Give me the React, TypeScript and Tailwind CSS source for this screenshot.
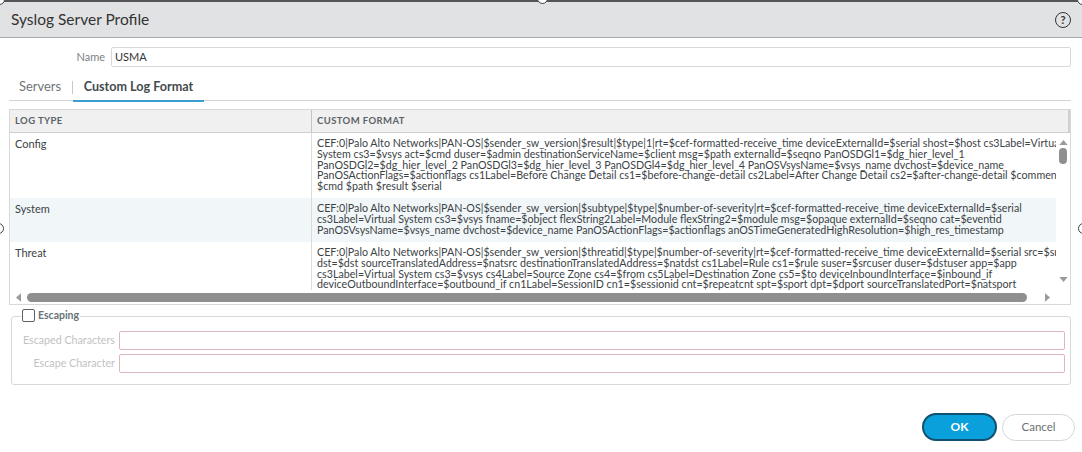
const rows = [
  {
    type: "Config",
    height: "h-[65px]",
    bg: "",
    lines: [
      "CEF:0|Palo Alto Networks|PAN-OS|$sender_sw_version|$result|$type|1|rt=$cef-formatted-receive_time deviceExternalId=$serial shost=$host cs3Label=Virtual",
      "System cs3=$vsys act=$cmd duser=$admin destinationServiceName=$client msg=$path externalId=$seqno PanOSDGl1=$dg_hier_level_1",
      "PanOSDGl2=$dg_hier_level_2 PanOSDGl3=$dg_hier_level_3 PanOSDGl4=$dg_hier_level_4 PanOSVsysName=$vsys_name dvchost=$device_name",
      "PanOSActionFlags=$actionflags cs1Label=Before Change Detail cs1=$before-change-detail cs2Label=After Change Detail cs2=$after-change-detail $comment",
      "$cmd $path $result $serial",
    ],
  },
  {
    type: "System",
    height: "h-[44px]",
    bg: "bg-[#f1f6f8]",
    lines: [
      "CEF:0|Palo Alto Networks|PAN-OS|$sender_sw_version|$subtype|$type|$number-of-severity|rt=$cef-formatted-receive_time deviceExternalId=$serial",
      "cs3Label=Virtual System cs3=$vsys fname=$object flexString2Label=Module flexString2=$module msg=$opaque externalId=$seqno cat=$eventid",
      "PanOSVsysName=$vsys_name dvchost=$device_name PanOSActionFlags=$actionflags anOSTimeGeneratedHighResolution=$high_res_timestamp",
    ],
  },
  {
    type: "Threat",
    height: "h-[48px]",
    bg: "",
    lines: [
      "CEF:0|Palo Alto Networks|PAN-OS|$sender_sw_version|$threatid|$type|$number-of-severity|rt=$cef-formatted-receive_time deviceExternalId=$serial src=$src",
      "dst=$dst sourceTranslatedAddress=$natsrc destinationTranslatedAddress=$natdst cs1Label=Rule cs1=$rule suser=$srcuser duser=$dstuser app=$app",
      "cs3Label=Virtual System cs3=$vsys cs4Label=Source Zone cs4=$from cs5Label=Destination Zone cs5=$to deviceInboundInterface=$inbound_if",
      "deviceOutboundInterface=$outbound_if cn1Label=SessionID cn1=$sessionid cnt=$repeatcnt spt=$sport dpt=$dport sourceTranslatedPort=$natsport",
    ],
  },
];

function Handle({ className }: { className: string }) {
  return <span className={`absolute size-[11px] rounded-full border border-[#444] bg-white ${className}`} />;
}

function Arrow({ dir }: { dir: "up" | "down" | "left" | "right" }) {
  const points = {
    up: "0,6 5,0 10,6",
    down: "0,0 5,6 10,0",
    left: "6,0 0,5 6,10",
    right: "0,0 6,5 0,10",
  }[dir];
  const box = dir === "up" || dir === "down" ? "0 0 10 6" : "0 0 6 10";
  const size = dir === "up" || dir === "down" ? "h-[5px] w-[9px]" : "h-[9px] w-[5px]";
  return (
    <svg viewBox={box} className={size}>
      <polygon points={points} fill="#9a9a9a" />
    </svg>
  );
}

function EscapeField({ label }: { label: string }) {
  return (
    <div className="flex items-center">
      <span className="w-[103px] text-right text-[10.7px] text-[#c2c2c2]">{label}</span>
      <div className="ml-[4px] h-[19px] w-[946px] rounded-[2px] border border-[#dcb8bd] bg-white" />
    </div>
  );
}

export default function App() {
  return (
    <div className="relative h-[452px] w-[1082px] overflow-hidden bg-white font-['Lato',sans-serif] text-[#3c4346]">
      <header className="flex h-[38px] items-center justify-between border-t-2 border-t-[#555] border-b border-b-[#a8a8a8] bg-[#e1e2e3] pl-[11px] pr-[11px]">
        <h1 className="text-[15.5px] text-[#333]">Syslog Server Profile</h1>
        <span className="flex size-[16px] items-center justify-center rounded-full border-[1.5px] border-[#333] text-[11px] font-bold leading-none text-[#333]">
          ?
        </span>
      </header>

      <Handle className="-left-[6px] -top-[6px]" />
      <Handle className="left-[537px] -top-[7px]" />
      <Handle className="-right-[6px] -top-[6px]" />
      <Handle className="-left-[7px] top-[223px]" />
      <Handle className="-right-[7px] top-[223px]" />

      <div className="mt-[9px] flex items-center">
        <span className="w-[105px] text-right text-[11px] text-[#7b8184]">Name</span>
        <div className="ml-[6px] flex h-[20px] w-[960px] items-center rounded-[2px] border border-[#d8d8d8] px-[3px] text-[11px] text-[#333]">
          USMA
        </div>
      </div>

      <nav className="mx-[9px] mt-[7px] flex h-[27px] w-[1062px] items-center border-b border-[#d2d2d2]">
        <span className="ml-[10px] text-[12.9px] text-[#6f7578]">Servers</span>
        <span className="ml-[11px] h-[13px] w-px bg-[#c8c8c8]" />
        <span className="relative flex h-[27px] w-[131px] items-center justify-center text-[12.6px] font-bold text-[#444b4e]">
          Custom Log Format
          <span className="absolute inset-x-0 -bottom-px h-[2px] bg-[#3a9fd0]" />
        </span>
      </nav>

      <section className="mx-[9px] mt-[8px] h-[196px] w-[1062px] border border-[#d8d8d8]">
        <div className="flex h-[23px] border-b border-[#cfcfcf] bg-[#f0f0f0] text-[9.5px] font-bold tracking-[0.4px] text-[#5c6366]">
          <div className="flex w-[302px] items-center border-r border-[#c4c4c4] pl-[5px]">LOG TYPE</div>
          <div className="flex flex-1 items-center pl-[5px]">CUSTOM FORMAT</div>
          <div className="w-[2px] bg-[#d0d0d0]" />
        </div>

        <div className="flex h-[157px]">
          <div className="min-w-0 flex-1 overflow-hidden">
            {rows.map((row) => (
              <div key={row.type} className={`flex overflow-hidden ${row.height} ${row.bg}`}>
                <div className="w-[302px] shrink-0 border-r border-[#dcdcdc] pl-[5px] pt-[4px] text-[11px] leading-[13px]">
                  {row.type}
                </div>
                <div className="min-w-0 flex-1 overflow-hidden pl-[5px] pt-[5px] text-[10.7px] leading-[10.75px]">
                  {row.lines.map((line) => (
                    <div key={line} className="whitespace-nowrap">
                      {line}
                    </div>
                  ))}
                </div>
              </div>
            ))}
          </div>
          <div className="flex w-[14px] shrink-0 flex-col items-center pt-[7px]">
            <Arrow dir="up" />
            <div className="mt-[3px] h-[16px] w-[8px] rounded-[4px] bg-[#8f8f8f]" />
            <div className="mt-auto pb-[8px]">
              <Arrow dir="down" />
            </div>
          </div>
        </div>

        <div className="flex h-[14px] items-center">
          <div className="ml-[6px]">
            <Arrow dir="left" />
          </div>
          <div className="ml-[6px] h-[9px] w-[1000px] rounded-[5px] bg-[#8f8f8f]" />
          <div className="ml-[18px]">
            <Arrow dir="right" />
          </div>
        </div>
      </section>

      <section className="relative ml-[11px] mt-[11px] h-[69px] w-[1060px] rounded-[3px] border border-[#d8d8d8] pt-[14px]">
        <div className="absolute -top-[9px] left-[9px] flex items-center gap-[3px] bg-white px-[1px]">
          <span className="size-[13px] rounded-[2px] border border-[#5a6266] bg-white" />
          <span className="text-[10.5px] font-bold text-[#6a7478]">Escaping</span>
        </div>
        <div className="flex flex-col gap-[4px]">
          <EscapeField label="Escaped Characters" />
          <EscapeField label="Escape Character" />
        </div>
      </section>

      <footer className="mt-[28px] flex items-center pl-[922px]">
        <button className="h-[28px] w-[75px] rounded-full border-2 border-[#12506f] bg-[#0aa0dc] text-[12px] font-bold text-white">
          OK
        </button>
        <button className="ml-[5px] h-[27px] w-[73px] rounded-full border border-[#d6d6d6] bg-white text-[11.5px] text-[#6b7073]">
          Cancel
        </button>
      </footer>
    </div>
  );
}
